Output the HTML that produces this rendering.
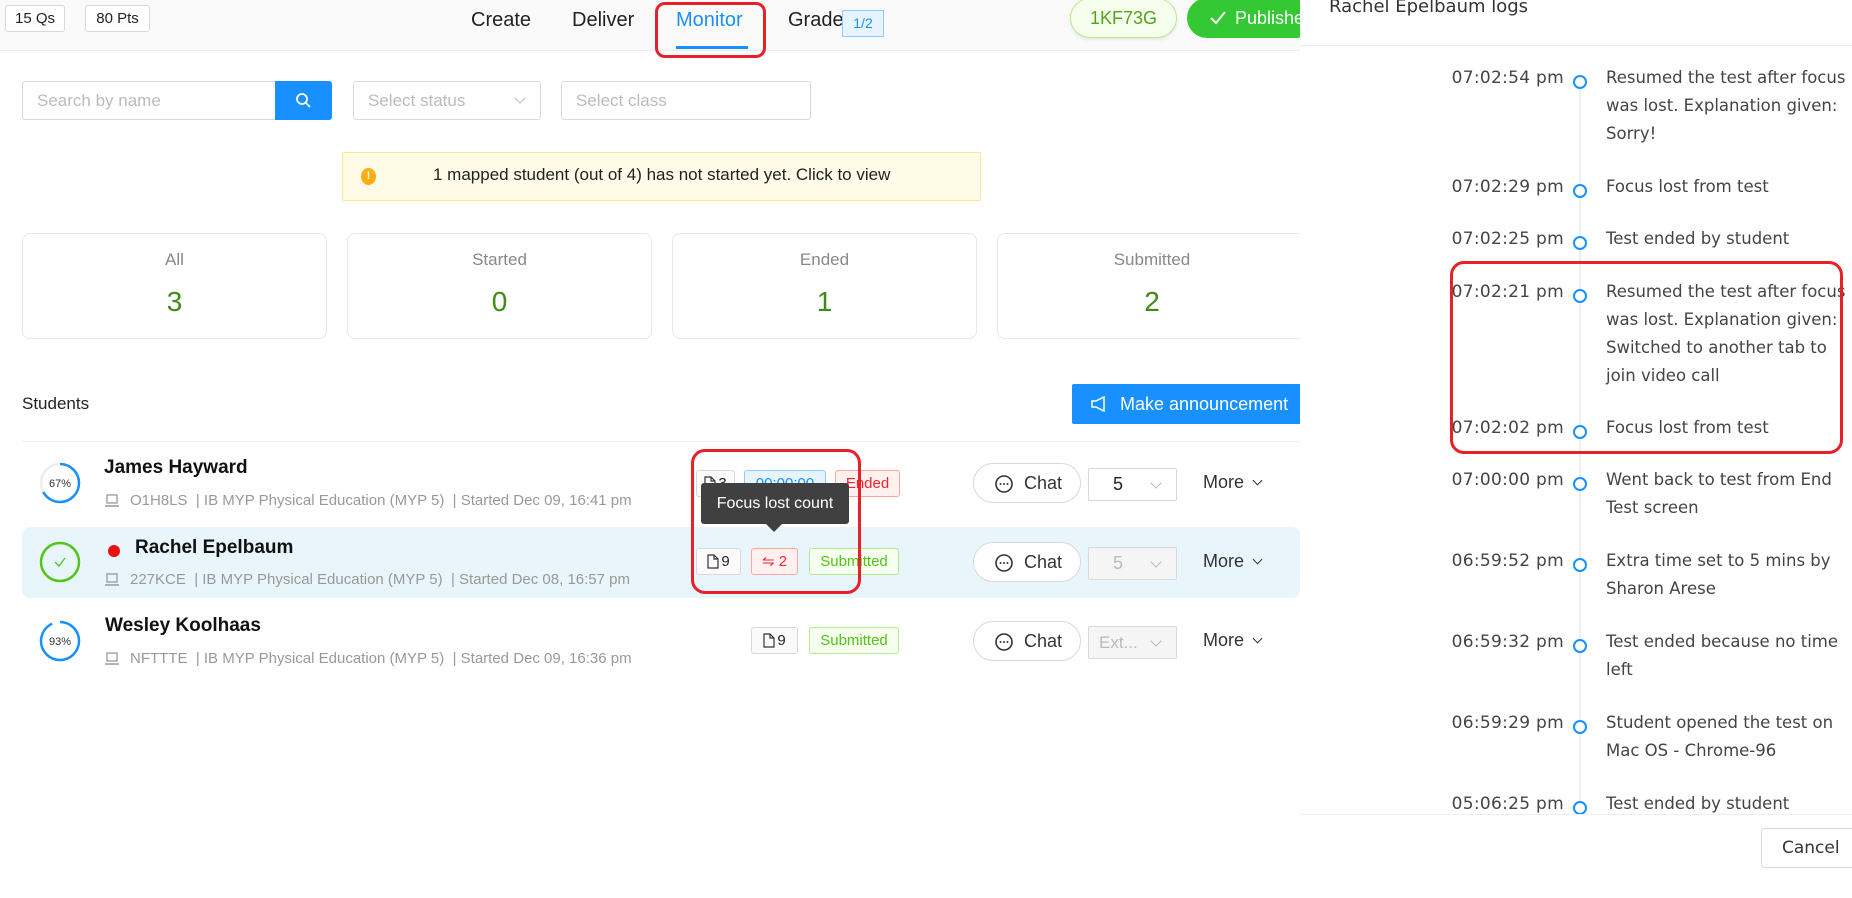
<!DOCTYPE html>
<html><head><meta charset="utf-8"><style>
*{box-sizing:border-box;margin:0;padding:0}
body{width:1852px;height:898px;overflow:hidden;background:#fff;font-family:"Liberation Sans",sans-serif;color:#222;position:relative}
.a{position:absolute}
.box{position:absolute;border:1px solid #d9d9d9;border-radius:3px;background:#fff}
.ph{color:#bbb;font-size:17px}
.card{position:absolute;top:233px;height:106px;width:305px;border:1px solid #e8e8e8;border-radius:8px;text-align:center}
.card .l{position:absolute;top:16px;width:100%;font-size:17px;color:#888}
.card .n{position:absolute;top:52px;width:100%;font-size:28px;color:#3f8b17}
.name{position:absolute;font-size:19px;font-weight:bold;color:#111}
.meta{position:absolute;font-size:15px;color:#999;white-space:nowrap;padding-left:26px}
.meta svg{position:absolute;left:0;top:2px}
.bd{position:absolute;height:27px;border:1px solid #d9d9d9;border-radius:3px;font-size:15px;line-height:25px;text-align:center;background:#fafafa}
.bd svg{vertical-align:-3px;margin-right:2px}
.chat{position:absolute;left:973px;width:108px;height:40px;border:1px solid #d9d9d9;border-radius:20px;background:#fff;font-size:18px;line-height:38px;padding-left:50px;color:#333}
.chat svg{position:absolute;left:20px;top:10px}
.sel{position:absolute;left:1088px;width:89px;height:33px;border:1px solid #d9d9d9;border-radius:2px;font-size:18px;line-height:31px;padding-left:24px}
.sel:after{content:"";position:absolute;right:16px;top:10px;width:7px;height:7px;border-right:1.3px solid #bbb;border-bottom:1.3px solid #bbb;transform:rotate(45deg)}
.more{position:absolute;left:1203px;font-size:18px;color:#333}
.more:after{content:"";display:inline-block;margin-left:10px;width:6px;height:6px;border-right:1.5px solid #333;border-bottom:1.5px solid #333;transform:rotate(45deg);vertical-align:4px}
.t{position:absolute;right:288px;font-size:17px;color:#444;font-family:"DejaVu Sans",sans-serif;letter-spacing:0.3px;text-align:right;white-space:nowrap}
.dot{position:absolute;left:1573px;width:14px;height:14px;border:2.2px solid #1890ff;border-radius:50%;background:#fff}
.m{position:absolute;left:1606px;width:240px;font-size:16.5px;line-height:28px;color:#444;font-family:"DejaVu Sans",sans-serif}
</style></head><body>
<div class="a" style="left:0;top:0;width:1300px;height:51px;background:#fafafa;border-bottom:1px solid #eee"></div>
<div class="box" style="left:5px;top:5px;width:60px;height:27px;font-size:15px;line-height:25px;text-align:center">15 Qs</div>
<div class="box" style="left:85px;top:5px;width:65px;height:27px;font-size:15px;line-height:25px;text-align:center">80 Pts</div>
<div class="a" style="left:471px;top:9px;font-size:20px;color:#222">Create</div>
<div class="a" style="left:572px;top:9px;font-size:20px;color:#222">Deliver</div>
<div class="a" style="left:676px;top:9px;font-size:20px;color:#1890ff">Monitor</div>
<div class="a" style="left:676px;top:46px;width:72px;height:3px;background:#1890ff"></div>
<div class="a" style="left:655px;top:2px;width:111px;height:56px;border:3px solid #e8202a;border-radius:10px"></div>
<div class="a" style="left:788px;top:9px;font-size:20px;color:#222">Grade</div>
<div class="a" style="left:842px;top:10px;width:42px;height:27px;background:#e6f4ff;border:1px solid #91caff;font-size:14px;color:#1890ff;text-align:center;line-height:25px">1/2</div>
<div class="a" style="left:1070px;top:-2px;width:107px;height:40px;border:1px solid #b7eb8f;background:#f6ffed;border-radius:20px;color:#52a41a;font-size:18px;text-align:center;line-height:38px;box-shadow:0 2px 3px rgba(0,0,0,.08)">1KF73G</div>
<div class="a" style="left:1187px;top:-2px;width:130px;height:40px;background:#34c934;border-radius:20px;color:#fff;font-size:18px;line-height:40px;padding-left:48px">Publishe
<svg class="a" style="left:22px;top:12px" width="18" height="16"><path d="M2 8l5 5 9-11" stroke="#fff" stroke-width="2" fill="none"/></svg></div>
<div class="box" style="left:22px;top:81px;width:255px;height:39px;padding:9px 14px"><span class="ph">Search by name</span></div>
<div class="a" style="left:275px;top:81px;width:57px;height:39px;background:#1890ff;border-radius:0 3px 3px 0">
<svg class="a" style="left:20px;top:11px" width="18" height="18"><circle cx="7" cy="7" r="5" stroke="#fff" stroke-width="1.8" fill="none"/><path d="M11 11l4 4" stroke="#fff" stroke-width="1.8"/></svg></div>
<div class="box" style="left:353px;top:81px;width:188px;height:39px;padding:9px 14px"><span class="ph">Select status</span><span class="a" style="right:16px;top:12px;width:8px;height:8px;border-right:1.3px solid #bbb;border-bottom:1.3px solid #bbb;transform:rotate(45deg)"></span></div>
<div class="box" style="left:561px;top:81px;width:250px;height:39px;padding:9px 14px"><span class="ph">Select class</span></div>
<div class="a" style="left:342px;top:152px;width:639px;height:49px;background:#fffbe6;border:1px solid #ffe58f;border-radius:2px"></div>
<div class="a" style="left:361px;top:168px;width:15px;height:17px;background:#faad14;border-radius:50%;color:#fff;font-size:11px;text-align:center;line-height:17px;font-weight:bold">!</div>
<div class="a" style="left:433px;top:165px;font-size:17px;color:#222">1 mapped student (out of 4) has not started yet. Click to view</div>
<div class="card" style="left:22px"><div class="l">All</div><div class="n">3</div></div>
<div class="card" style="left:347px"><div class="l">Started</div><div class="n">0</div></div>
<div class="card" style="left:672px"><div class="l">Ended</div><div class="n">1</div></div>
<div class="card" style="left:997px;width:310px"><div class="l">Submitted</div><div class="n">2</div></div>
<div class="a" style="left:22px;top:394px;font-size:17px;color:#222">Students</div>
<div class="a" style="left:1072px;top:384px;width:240px;height:40px;background:#1890ff;color:#fff;font-size:18px;line-height:40px;padding-left:48px;border-radius:2px">Make announcement
<svg class="a" style="left:18px;top:12px" width="18" height="16"><path d="M2 5h4l8-4v14l-8-4H2z" stroke="#fff" stroke-width="1.5" fill="none"/></svg></div>
<div class="a" style="left:22px;top:441px;width:1278px;height:1px;background:#eee"></div>
<div class="a" style="left:22px;top:527px;width:1278px;height:71px;background:#e8f5fb;border-radius:8px"></div>
<svg class="a" style="left:37px;top:460px" width="46" height="46"><circle cx="23" cy="23" r="19" stroke="#eee" stroke-width="2.5" fill="none"/><circle cx="23" cy="23" r="19" stroke="#1890ff" stroke-width="2.5" fill="none" stroke-dasharray="80 120" transform="rotate(-90 23 23)"/><text x="23" y="27" font-size="11" text-anchor="middle" fill="#333" font-family="Liberation Sans">67%</text></svg>
<svg class="a" style="left:37px;top:539px" width="46" height="46"><circle cx="23" cy="23" r="19" stroke="#52c41a" stroke-width="2.5" fill="none"/><path d="M18 23l4 4 6-8" stroke="#52c41a" stroke-width="1.3" fill="none"/></svg>
<svg class="a" style="left:37px;top:618px" width="46" height="46"><circle cx="23" cy="23" r="19" stroke="#1890ff" stroke-width="2.5" fill="none" stroke-dasharray="111 120" transform="rotate(-90 23 23)"/><text x="23" y="27" font-size="11" text-anchor="middle" fill="#333" font-family="Liberation Sans">93%</text></svg>
<div class="name" style="left:104px;top:457px">James Hayward</div>
<div class="meta" style="left:104px;top:492px"><svg width="16" height="14"><rect x="3" y="1" width="10" height="8" stroke="#999" stroke-width="1.3" fill="none"/><path d="M1 12h14" stroke="#999" stroke-width="1.5"/></svg>O1H8LS &nbsp;| IB MYP Physical Education (MYP 5) &nbsp;| Started Dec 09, 16:41 pm</div>
<div class="a" style="left:108px;top:545px;width:12px;height:12px;border-radius:50%;background:#e81010"></div>
<div class="name" style="left:135px;top:537px">Rachel Epelbaum</div>
<div class="meta" style="left:104px;top:571px"><svg width="16" height="14"><rect x="3" y="1" width="10" height="8" stroke="#999" stroke-width="1.3" fill="none"/><path d="M1 12h14" stroke="#999" stroke-width="1.5"/></svg>227KCE &nbsp;| IB MYP Physical Education (MYP 5) &nbsp;| Started Dec 08, 16:57 pm</div>
<div class="name" style="left:105px;top:615px">Wesley Koolhaas</div>
<div class="meta" style="left:104px;top:650px"><svg width="16" height="14"><rect x="3" y="1" width="10" height="8" stroke="#999" stroke-width="1.3" fill="none"/><path d="M1 12h14" stroke="#999" stroke-width="1.5"/></svg>NFTTTE &nbsp;| IB MYP Physical Education (MYP 5) &nbsp;| Started Dec 09, 16:36 pm</div>
<div class="bd" style="left:696px;top:470px;width:39px"><svg width="12" height="15"><path d="M1 1h6l4 4v9H1z M7 1v4h4" stroke="#333" stroke-width="1.2" fill="none"/></svg>3</div>
<div class="bd" style="left:744px;top:470px;width:82px;background:#e6f4ff;border-color:#91caff;color:#1890ff">00:00:00</div>
<div class="bd" style="left:835px;top:470px;width:65px;background:#fff1f0;border-color:#ffa39e;color:#f5222d">Ended</div>
<div class="bd" style="left:696px;top:548px;width:45px"><svg width="12" height="15"><path d="M1 1h6l4 4v9H1z M7 1v4h4" stroke="#333" stroke-width="1.2" fill="none"/></svg>9</div>
<div class="bd" style="left:751px;top:548px;width:47px;background:#fff1f0;border-color:#ffa39e;color:#f5222d">&#x21CB; 2</div>
<div class="bd" style="left:809px;top:548px;width:90px;background:#f6ffed;border-color:#b7eb8f;color:#52c41a">Submitted</div>
<div class="bd" style="left:751px;top:627px;width:47px"><svg width="12" height="15"><path d="M1 1h6l4 4v9H1z M7 1v4h4" stroke="#333" stroke-width="1.2" fill="none"/></svg>9</div>
<div class="bd" style="left:809px;top:627px;width:90px;background:#f6ffed;border-color:#b7eb8f;color:#52c41a">Submitted</div>
<div class="a" style="left:701px;top:483px;width:148px;height:41px;background:#404040;border-radius:3px;color:#fff;font-size:16px;line-height:41px;text-align:center">Focus lost count</div>
<div class="a" style="left:766px;top:524px;width:0;height:0;border-left:8px solid transparent;border-right:8px solid transparent;border-top:8px solid #404040"></div>
<div class="a" style="left:691px;top:449px;width:170px;height:145px;border:3px solid #e8202a;border-radius:14px"></div>
<div class="chat" style="top:463px"><svg width="20" height="20"><circle cx="10" cy="10" r="8" stroke="#333" stroke-width="1.6" fill="none"/><circle cx="6.5" cy="10" r="1" fill="#333"/><circle cx="10" cy="10" r="1" fill="#333"/><circle cx="13.5" cy="10" r="1" fill="#333"/></svg>Chat</div>
<div class="chat" style="top:542px"><svg width="20" height="20"><circle cx="10" cy="10" r="8" stroke="#333" stroke-width="1.6" fill="none"/><circle cx="6.5" cy="10" r="1" fill="#333"/><circle cx="10" cy="10" r="1" fill="#333"/><circle cx="13.5" cy="10" r="1" fill="#333"/></svg>Chat</div>
<div class="chat" style="top:621px"><svg width="20" height="20"><circle cx="10" cy="10" r="8" stroke="#333" stroke-width="1.6" fill="none"/><circle cx="6.5" cy="10" r="1" fill="#333"/><circle cx="10" cy="10" r="1" fill="#333"/><circle cx="13.5" cy="10" r="1" fill="#333"/></svg>Chat</div>
<div class="sel" style="top:468px">5</div>
<div class="sel" style="top:547px;background:#f5f5f5;color:#bbb">5</div>
<div class="sel" style="top:626px;background:#f5f5f5;color:#bbb;padding-left:10px;font-size:17px">Ext...</div>
<div class="more" style="top:472px">More</div>
<div class="more" style="top:551px">More</div>
<div class="more" style="top:630px">More</div>
<div class="a" style="left:1300px;top:0;width:552px;height:898px;background:#fff"></div>
<div class="a" style="left:1329px;top:-4px;font-size:18px;color:#333;font-family:'DejaVu Sans',sans-serif">Rachel Epelbaum logs</div>
<div class="a" style="left:1300px;top:45px;width:552px;height:1px;background:#eee"></div>
<div class="a" style="left:1579px;top:80px;width:2px;height:734px;background:#eee"></div>
<div class="t" style="top:68px">07:02:54 pm</div><div class="dot" style="top:75px"></div><div class="m" style="top:64px">Resumed the test after focus was lost. Explanation given: Sorry!</div>
<div class="t" style="top:177px">07:02:29 pm</div><div class="dot" style="top:184px"></div><div class="m" style="top:173px">Focus lost from test</div>
<div class="t" style="top:229px">07:02:25 pm</div><div class="dot" style="top:236px"></div><div class="m" style="top:225px">Test ended by student</div>
<div class="t" style="top:282px">07:02:21 pm</div><div class="dot" style="top:289px"></div><div class="m" style="top:278px">Resumed the test after focus was lost. Explanation given: Switched to another tab to join video call</div>
<div class="t" style="top:418px">07:02:02 pm</div><div class="dot" style="top:425px"></div><div class="m" style="top:414px">Focus lost from test</div>
<div class="t" style="top:470px">07:00:00 pm</div><div class="dot" style="top:477px"></div><div class="m" style="top:466px">Went back to test from End Test screen</div>
<div class="t" style="top:551px">06:59:52 pm</div><div class="dot" style="top:558px"></div><div class="m" style="top:547px">Extra time set to 5 mins by Sharon Arese</div>
<div class="t" style="top:632px">06:59:32 pm</div><div class="dot" style="top:639px"></div><div class="m" style="top:628px">Test ended because no time left</div>
<div class="t" style="top:713px">06:59:29 pm</div><div class="dot" style="top:720px"></div><div class="m" style="top:709px">Student opened the test on Mac OS - Chrome-96</div>
<div class="t" style="top:794px">05:06:25 pm</div><div class="dot" style="top:801px"></div><div class="m" style="top:790px">Test ended by student</div>
<div class="a" style="left:1450px;top:261px;width:393px;height:193px;border:3px solid #e8202a;border-radius:14px"></div>
<div class="a" style="left:1300px;top:814px;width:552px;height:84px;background:#fff;border-top:1px solid #eee"></div>
<div class="a" style="left:1761px;top:828px;width:100px;height:40px;border:1px solid #d9d9d9;border-radius:3px;font-size:17px;line-height:38px;padding-left:20px;color:#333;font-family:'DejaVu Sans',sans-serif">Cancel</div>
</body></html>
